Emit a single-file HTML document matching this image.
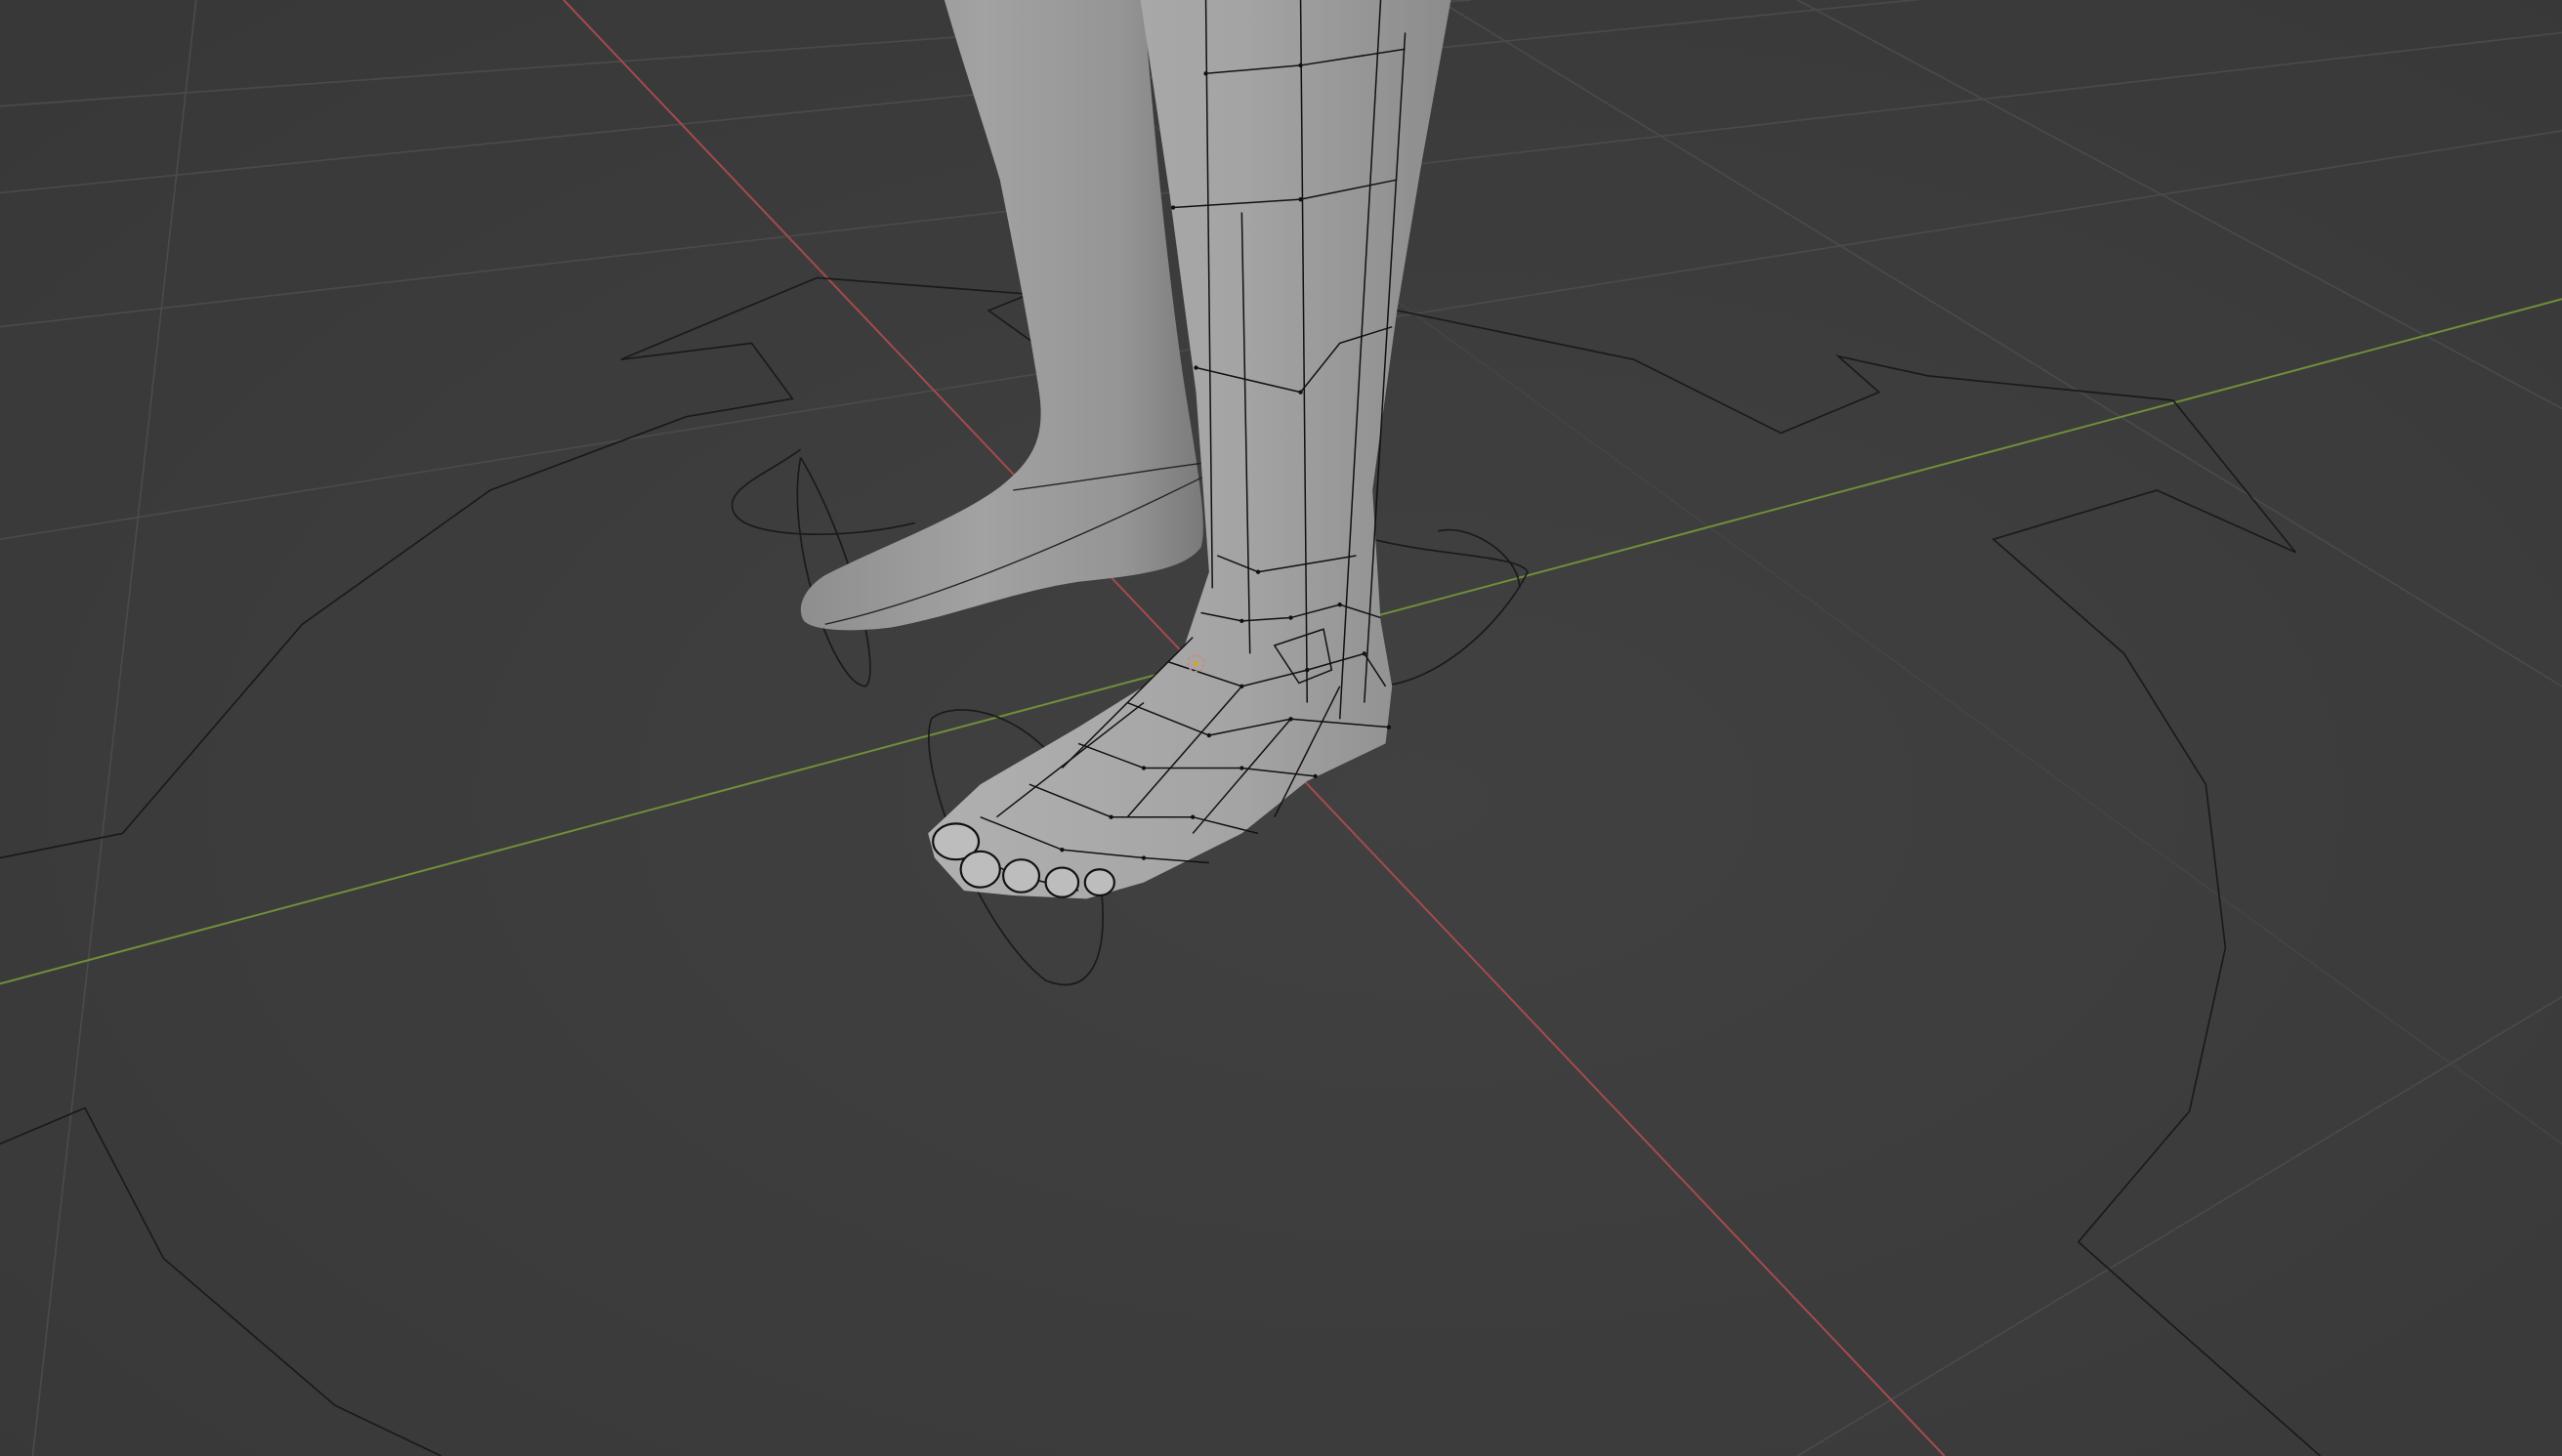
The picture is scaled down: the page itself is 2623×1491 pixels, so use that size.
<!DOCTYPE html>
<html><head><meta charset="utf-8"><style>
html,body{margin:0;padding:0;background:#3a3a3a;overflow:hidden}
svg{display:block;width:2623px;height:1491px}
</style></head><body>
<svg viewBox="0 0 1568 891" preserveAspectRatio="none" xmlns="http://www.w3.org/2000/svg">
<defs>
<radialGradient id="bg" cx="0.55" cy="0.55" r="0.75">
<stop offset="0" stop-color="#414141"/><stop offset="1" stop-color="#383838"/></radialGradient>
<linearGradient id="legA" x1="0" x2="1" y1="0" y2="0">
<stop offset="0" stop-color="#8e8e8e"/><stop offset="0.45" stop-color="#a2a2a2"/><stop offset="0.8" stop-color="#959595"/><stop offset="1" stop-color="#7a7a7a"/></linearGradient>
<linearGradient id="legB" x1="0" x2="1" y1="0" y2="0">
<stop offset="0" stop-color="#b0b0b0"/><stop offset="0.6" stop-color="#a4a4a4"/><stop offset="1" stop-color="#8c8c8c"/></linearGradient>
</defs>
<rect width="1568" height="891" fill="url(#bg)"/>
<g stroke="#4a4a4a" stroke-width="1" fill="none">
<line x1="0" y1="65" x2="900" y2="0"/>
<line x1="0" y1="118" x2="1568" y2="-40"/>
<line x1="0" y1="200" x2="1568" y2="20"/>
<line x1="0" y1="330" x2="1568" y2="80"/>
<line x1="120" y1="0" x2="20" y2="891"/>
<line x1="880" y1="0" x2="1568" y2="420"/>
<line x1="1100" y1="0" x2="1568" y2="250"/>
<line x1="1568" y1="610" x2="1100" y2="891"/>
<line x1="600" y1="0" x2="1568" y2="700" stroke="#444"/>
</g>
<line x1="345" y1="0" x2="1190" y2="891" stroke="#a44a4f" stroke-width="1.2"/>
<line x1="0" y1="602" x2="1568" y2="183" stroke="#6f8f3a" stroke-width="1.2"/>
<g stroke="#1a1a1a" stroke-width="1" fill="none">
<polyline points="0,525 75,510 185,382 300,300 420,255 485,244 460,210 380,220 500,170 630,180 605,190 640,215"/>
<polyline points="855,190 1000,220 1090,265 1150,240 1125,218 1180,230 1330,245 1405,338 1320,300 1220,330 1300,400 1350,480 1362,580 1340,680 1272,760 1420,891"/>
<polyline points="0,700 52,678 100,770 205,860 270,891"/>
<path d="M490,275 C470,290 440,300 450,315 C460,330 520,330 560,320"/>
<path d="M490,280 C480,330 510,420 530,420 C540,410 520,330 490,280"/>
<path d="M570,440 C560,470 600,570 640,600 C690,620 680,520 650,470 C620,430 580,430 570,440"/>
<path d="M840,330 C880,340 930,340 935,350 C920,380 880,420 840,420 M880,325 C900,320 930,340 930,360"/>
</g>
<path d="M578,0 L700,0 C706,80 714,160 724,230 C730,270 740,320 735,335 C725,348 700,352 660,356 C620,362 580,378 545,384 C520,387 498,386 492,380 C487,372 492,360 505,352 C540,334 585,318 612,298 C632,282 640,268 636,240 C630,200 620,150 612,110 C600,70 588,35 578,0 Z" fill="url(#legA)"/>
<g stroke="#222" stroke-width="0.8" fill="none">
<path d="M505,382 C560,370 640,340 740,290"/>
<path d="M620,300 C680,292 720,285 740,283"/>
</g>
<path d="M698,0 L888,0 L870,100 L855,190 L840,300 L845,380 L852,420 L848,455 L800,478 L760,510 L700,540 L665,550 L620,548 L590,545 L572,525 L568,510 L600,480 L660,445 L700,420 L725,395 L740,350 L732,240 L716,120 Z" fill="url(#legB)"/>
<g stroke="#111" stroke-width="0.9" fill="none">
<polyline points="738,45 796,40 860,30"/>
<polyline points="718,127 796,122 855,110"/>
<polyline points="732,225 796,240 820,210 852,200"/>
<line x1="738" y1="0" x2="742" y2="360"/>
<line x1="796" y1="0" x2="800" y2="430"/>
<line x1="760" y1="130" x2="765" y2="400"/>
<line x1="845" y1="0" x2="820" y2="440"/>
<line x1="860" y1="20" x2="835" y2="430"/>
<polyline points="745,340 770,350 800,345 830,340"/>
<polyline points="735,375 760,380 790,378 820,370 845,378"/>
<polyline points="715,405 760,420 800,410 835,400 848,420"/>
<polyline points="690,430 740,450 790,440 850,445"/>
<polyline points="660,455 700,470 760,470 805,475"/>
<polyline points="630,480 680,500 730,500 770,510"/>
<polyline points="600,500 650,520 700,525 740,528"/>
<polyline points="580,515 620,535 660,545"/>
<line x1="730" y1="390" x2="650" y2="470"/>
<line x1="760" y1="420" x2="690" y2="500"/>
<line x1="790" y1="440" x2="730" y2="510"/>
<line x1="820" y1="420" x2="780" y2="500"/>
<line x1="700" y1="430" x2="610" y2="500"/>
<path d="M780,395 L810,385 L815,410 L795,418 Z"/>
</g>
<g fill="#111">
<circle cx="738" cy="45" r="1.3"/><circle cx="796" cy="40" r="1.3"/><circle cx="718" cy="127" r="1.3"/><circle cx="796" cy="122" r="1.3"/>
<circle cx="732" cy="225" r="1.3"/><circle cx="796" cy="240" r="1.3"/><circle cx="770" cy="350" r="1.3"/><circle cx="760" cy="380" r="1.3"/>
<circle cx="790" cy="378" r="1.3"/><circle cx="760" cy="420" r="1.3"/><circle cx="800" cy="410" r="1.3"/><circle cx="740" cy="450" r="1.3"/>
<circle cx="790" cy="440" r="1.3"/><circle cx="700" cy="470" r="1.3"/><circle cx="760" cy="470" r="1.3"/><circle cx="680" cy="500" r="1.3"/>
<circle cx="730" cy="500" r="1.3"/><circle cx="650" cy="520" r="1.3"/><circle cx="700" cy="525" r="1.3"/><circle cx="620" cy="535" r="1.3"/>
<circle cx="835" cy="400" r="1.3"/><circle cx="820" cy="370" r="1.3"/><circle cx="850" cy="445" r="1.3"/><circle cx="805" cy="475" r="1.3"/>
</g>
<g stroke="#111" stroke-width="1.3" fill="#bdbdbd">
<ellipse cx="585" cy="515" rx="14" ry="11"/>
<ellipse cx="600" cy="532" rx="12" ry="11"/>
<ellipse cx="625" cy="536" rx="11" ry="10"/>
<ellipse cx="650" cy="540" rx="10" ry="9"/>
<ellipse cx="673" cy="540" rx="9" ry="8"/>
</g>
<circle cx="732" cy="406" r="5" fill="none" stroke="#c98a7a" stroke-width="1" stroke-dasharray="2,1.5"/>
<circle cx="732" cy="406" r="1.5" fill="#e0a020"/>
</svg>
</body></html>
